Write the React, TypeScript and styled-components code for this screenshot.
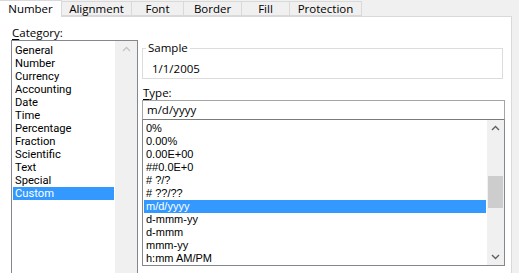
import styled, { createGlobalStyle } from "styled-components";

const Global = createGlobalStyle`
  html, body {
    margin: 0;
    padding: 0;
    background: #f0f0f0;
  }
  body {
    font-family: "Open Sans", "Noto Sans", sans-serif;
    font-size: 11px;
    color: #000;
  }
`;

const Window = styled.div`
  width: 519px;
  height: 273px;
  overflow: hidden;
  background: #f0f0f0;
  display: flex;
  flex-direction: column;
`;

const TabBar = styled.div`
  display: flex;
  height: 16px;
  position: relative;
  z-index: 1;
`;

const Tab = styled.div<{ $w: number; $active?: boolean }>`
  width: ${(p) => p.$w}px;
  box-sizing: border-box;
  display: flex;
  align-items: center;
  justify-content: center;
  border: 1px solid #d9d9d9;
  border-left-width: ${(p) => (p.$active ? 0 : 1)}px;
  border-bottom: ${(p) => (p.$active ? "none" : "1px solid #d9d9d9")};
  margin-left: ${(p) => (p.$active ? 0 : -1)}px;
  background: ${(p) => (p.$active ? "#fff" : "#f0f0f0")};
  height: ${(p) => (p.$active ? 17 : 15)}px;
  margin-top: ${(p) => (p.$active ? 0 : 1)}px;
  line-height: 14px;
  font-size: 11.5px;
`;

const Panel = styled.div`
  width: 512px;
  box-sizing: border-box;
  flex: 1;
  background: #fff;
  border-top: 1px solid #d9d9d9;
  border-right: 1px solid #d9d9d9;
  display: flex;
  padding: 8px 0 0 11px;
  gap: 4px;
`;

const LeftCol = styled.div`
  display: flex;
  flex-direction: column;
  width: 127px;
`;

const RightCol = styled.div`
  display: flex;
  flex-direction: column;
  width: 363px;
  padding-top: 16px;
`;

const Label = styled.div`
  line-height: 15px;
  padding-left: 1px;
  font-size: 11.5px;
  u {
    text-decoration-thickness: 1px;
    text-underline-offset: 2px;
  }
`;

const ListBox = styled.div<{ $border: string; $h: number }>`
  display: flex;
  height: ${(p) => p.$h}px;
  border: 1px solid ${(p) => p.$border};
  background: #fff;
  box-sizing: border-box;
`;

const Items = styled.div<{ $pad: number; $font: string; $size: number }>`
  flex: 1;
  padding: ${(p) => p.$pad}px 1px 0 1px;
  font-family: ${(p) => p.$font};
  font-size: ${(p) => p.$size}px;
`;

const Item = styled.div<{ $selected?: boolean }>`
  height: 13px;
  line-height: 13px;
  padding-left: 2px;
  white-space: nowrap;
  background: ${(p) => (p.$selected ? "#3399ff" : "transparent")};
  color: ${(p) => (p.$selected ? "#fff" : "#000")};
`;

const ScrollTrack = styled.div<{ $w: number }>`
  width: ${(p) => p.$w}px;
  background: #f0f0f0;
  display: flex;
  flex-direction: column;
  align-items: center;
`;

const Arrow = styled.div`
  height: 16px;
  display: flex;
  align-items: center;
  justify-content: center;
`;

const Thumb = styled.div`
  width: 15px;
  height: 32px;
  background: #cdcdcd;
  margin-top: 40px;
`;

const Spacer = styled.div`
  flex: 1;
`;

const SampleBox = styled.fieldset`
  margin: 0;
  width: 361px;
  box-sizing: border-box;
  border: 1px solid #dcdcdc;
  padding: 7px 9px 3px 9px;
  min-width: 0;
`;

const Legend = styled.legend`
  padding: 0 2px;
  margin-left: -6px;
  line-height: 14px;
  font-size: 11.5px;
`;

const SampleValue = styled.div`
  line-height: 13px;
  font-size: 11.5px;
`;

const TypeLabel = styled(Label)`
  margin-top: 6px;
`;

const TypeInput = styled.div`
  height: 20px;
  box-sizing: border-box;
  border: 1px solid #a5a5a5;
  border-bottom: 1px solid #7a7a7a;
  padding-left: 4px;
  line-height: 18px;
  font-size: 11.5px;
`;

const TypeList = styled(ListBox)`
  border-top: none;
`;

const Chevron = ({ down, color }: { down?: boolean; color: string }) => (
  <svg width="9" height="6" viewBox="0 0 9 6">
    <path
      d={down ? "M1 1 L4.5 4.5 L8 1" : "M1 5 L4.5 1.5 L8 5"}
      fill="none"
      stroke={color}
      strokeWidth="1.4"
    />
  </svg>
);

const categories = [
  "General",
  "Number",
  "Currency",
  "Accounting",
  "Date",
  "Time",
  "Percentage",
  "Fraction",
  "Scientific",
  "Text",
  "Special",
  "Custom",
];

const formats = [
  "0%",
  "0.00%",
  "0.00E+00",
  "##0.0E+0",
  "# ?/?",
  "# ??/??",
  "m/d/yyyy",
  "d-mmm-yy",
  "d-mmm",
  "mmm-yy",
  "h:mm AM/PM",
];

const tabs = [
  { name: "Number", w: 62 },
  { name: "Alignment", w: 71 },
  { name: "Font", w: 53 },
  { name: "Border", w: 59 },
  { name: "Fill", w: 49 },
  { name: "Protection", w: 73 },
];

const uiFont = 'Roboto, "Open Sans", sans-serif';
const listFont = '"Liberation Sans", Arial, sans-serif';

export default function App() {
  return (
    <Window>
      <Global />
      <TabBar>
        {tabs.map((t, i) => (
          <Tab key={t.name} $w={t.w} $active={i === 0}>
            {t.name}
          </Tab>
        ))}
      </TabBar>
      <Panel>
        <LeftCol>
          <Label>
            <u>C</u>ategory:
          </Label>
          <ListBox $border="#828790" $h={240}>
            <Items $pad={3} $font={uiFont} $size={11.2}>
              {categories.map((c) => (
                <Item key={c} $selected={c === "Custom"}>
                  {c}
                </Item>
              ))}
            </Items>
            <ScrollTrack $w={22}>
              <Arrow>
                <Chevron color="#c5c5c5" />
              </Arrow>
            </ScrollTrack>
          </ListBox>
        </LeftCol>
        <RightCol>
          <SampleBox>
            <Legend>Sample</Legend>
            <SampleValue>1/1/2005</SampleValue>
          </SampleBox>
          <TypeLabel>
            <u>T</u>ype:
          </TypeLabel>
          <TypeInput>m/d/yyyy</TypeInput>
          <TypeList $border="#828790" $h={146}>
            <Items $pad={2} $font={listFont} $size={11}>
              {formats.map((f) => (
                <Item key={f} $selected={f === "m/d/yyyy"}>
                  {f}
                </Item>
              ))}
            </Items>
            <ScrollTrack $w={17}>
              <Arrow>
                <Chevron color="#606060" />
              </Arrow>
              <Thumb />
              <Spacer />
              <Arrow>
                <Chevron down color="#606060" />
              </Arrow>
            </ScrollTrack>
          </TypeList>
        </RightCol>
      </Panel>
    </Window>
  );
}
